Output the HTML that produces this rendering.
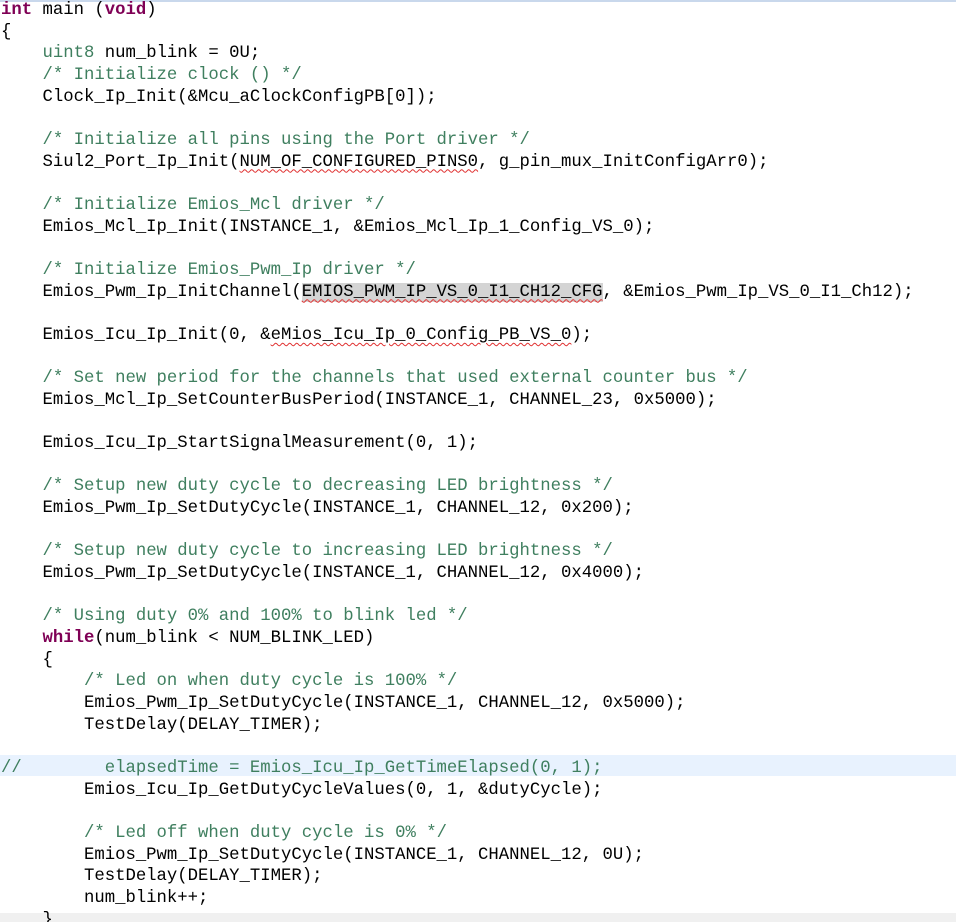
<!DOCTYPE html>
<html><head><meta charset="utf-8"><style>
html,body{margin:0;padding:0;background:#fff;width:956px;height:922px;overflow:hidden;position:relative}
.top{position:absolute;left:0;top:0;width:956px;height:2px;background:#c9d8ec}
.hl{position:absolute;left:0;top:755px;width:956px;height:21px;background:#e8f2fe}
.sb{position:absolute;left:0;top:913px;width:956px;height:9px;background:#f0f0f0}
pre{position:absolute;left:1px;top:0;margin:0;font-family:"Liberation Mono",monospace;font-size:17.3px;line-height:21.65px;color:#000}
.k{color:#7f0055;font-weight:bold}
.c{color:#3f7f5f}
.s{text-decoration:underline wavy #e03030;text-decoration-thickness:1px;text-underline-offset:3px}
.g{background:#d4d4d4}
</style></head><body>
<div class="top"></div><div class="hl"></div><div class="sb"></div>
<pre><span class="k">int</span> main (<span class="k">void</span>)
{
    <span class="c">uint8</span> num_blink = 0U;
    <span class="c">/* Initialize clock () */</span>
    Clock_Ip_Init(&amp;Mcu_aClockConfigPB[0]);

    <span class="c">/* Initialize all pins using the Port driver */</span>
    Siul2_Port_Ip_Init(<span class="s">NUM_OF_CONFIGURED_PINS0</span>, g_pin_mux_InitConfigArr0);

    <span class="c">/* Initialize Emios_Mcl driver */</span>
    Emios_Mcl_Ip_Init(INSTANCE_1, &amp;Emios_Mcl_Ip_1_Config_VS_0);

    <span class="c">/* Initialize Emios_Pwm_Ip driver */</span>
    Emios_Pwm_Ip_InitChannel(<span class="s g">EMIOS_PWM_IP_VS_0_I1_CH12_CFG</span>, &amp;Emios_Pwm_Ip_VS_0_I1_Ch12);

    Emios_Icu_Ip_Init(0, &amp;<span class="s">eMios_Icu_Ip_0_Config_PB_VS_0</span>);

    <span class="c">/* Set new period for the channels that used external counter bus */</span>
    Emios_Mcl_Ip_SetCounterBusPeriod(INSTANCE_1, CHANNEL_23, 0x5000);

    Emios_Icu_Ip_StartSignalMeasurement(0, 1);

    <span class="c">/* Setup new duty cycle to decreasing LED brightness */</span>
    Emios_Pwm_Ip_SetDutyCycle(INSTANCE_1, CHANNEL_12, 0x200);

    <span class="c">/* Setup new duty cycle to increasing LED brightness */</span>
    Emios_Pwm_Ip_SetDutyCycle(INSTANCE_1, CHANNEL_12, 0x4000);

    <span class="c">/* Using duty 0% and 100% to blink led */</span>
    <span class="k">while</span>(num_blink &lt; NUM_BLINK_LED)
    {
        <span class="c">/* Led on when duty cycle is 100% */</span>
        Emios_Pwm_Ip_SetDutyCycle(INSTANCE_1, CHANNEL_12, 0x5000);
        TestDelay(DELAY_TIMER);

<span class="c">//        elapsedTime = Emios_Icu_Ip_GetTimeElapsed(0, 1);</span>
        Emios_Icu_Ip_GetDutyCycleValues(0, 1, &amp;dutyCycle);

        <span class="c">/* Led off when duty cycle is 0% */</span>
        Emios_Pwm_Ip_SetDutyCycle(INSTANCE_1, CHANNEL_12, 0U);
        TestDelay(DELAY_TIMER);
        num_blink++;
    }
</pre>
</body></html>
